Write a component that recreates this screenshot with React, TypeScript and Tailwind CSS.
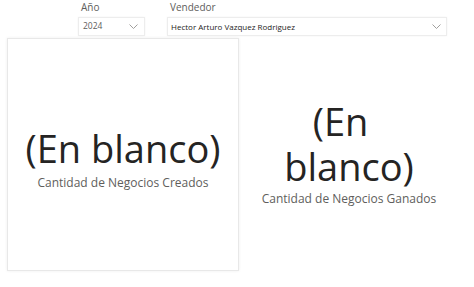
import React from "react";

const Chevron = () => (
  <svg width="9" height="5" viewBox="0 0 9 5" fill="none">
    <path d="M0.5 0.5 L4.5 4.5 L8.5 0.5" stroke="#a19f9d" strokeWidth="1" />
  </svg>
);

export default function App() {
  return (
    <div
      className="w-[474px] h-[287px] bg-white overflow-hidden"
      style={{ fontFamily: '"Open Sans", "Noto Sans", sans-serif' }}
    >
      {/* Slicers */}
      <div className="flex pl-[78px] h-[38px]">
        <div className="w-[67px] flex flex-col">
          <div className="pl-[3px] pt-[1px] h-[17px] text-[10px] leading-[12px] text-[#605e5c]">Año</div>
          <div className="h-[19px] border border-[#ededed] shadow-[0_0_2px_rgba(0,0,0,0.05)] flex items-center justify-between pl-[4px] pr-[6px] text-[8.5px] text-[#605e5c]">
            <span>2024</span>
            <Chevron />
          </div>
        </div>
        <div className="ml-[22px] w-[280px] flex flex-col">
          <div className="pl-[3px] pt-[1px] h-[17px] text-[10px] leading-[12px] text-[#605e5c]">Vendedor</div>
          <div className="h-[19px] border border-[#ededed] shadow-[0_0_2px_rgba(0,0,0,0.05)] flex items-center justify-between pl-[3px] pr-[5px] text-[8px] text-[#252423]">
            <span>Hector Arturo Vazquez Rodriguez</span>
            <Chevron />
          </div>
        </div>
      </div>

      {/* Cards */}
      <div className="flex">
        <div className="ml-[7px] w-[232px] h-[233px] border border-[#e8e8e8] shadow-[0_0_3px_rgba(0,0,0,0.07)] flex flex-col items-center justify-center pt-[8px]">
          <div className="text-[38px] leading-[44px] text-[#252423] mb-[5px]">(En blanco)</div>
          <div className="text-[12px] leading-[16px] text-[#605e5c]">Cantidad de Negocios Creados</div>
        </div>
        <div className="ml-[6px] w-[208px] h-[233px] flex flex-col items-center justify-center pb-[4px]">
          <div className="text-[38px] leading-[45px] text-[#252423] flex flex-col items-center">
            <span className="pr-[17px]">(En</span>
            <span>blanco)</span>
          </div>
          <div className="text-[12px] leading-[16px] text-[#605e5c] mt-[2px]">Cantidad de Negocios Ganados</div>
        </div>
      </div>
    </div>
  );
}
